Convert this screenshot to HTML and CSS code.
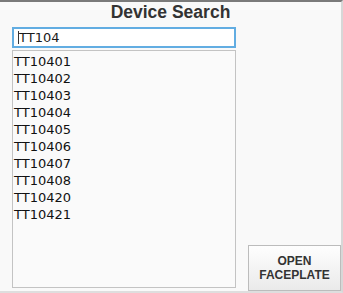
FILE: index.html
```html
<!DOCTYPE html>
<html>
<head>
	<meta charset="utf-8">
	<meta name="viewport" content="width=device-width,initial-scale=1.0">
	<title>Device Search</title>
	<link rel="stylesheet" href="styles.css">
</head>
<body>
	<div class="window">
		<h1>Device Search</h1>
		<div class="content">
			<!-- zoekveld + resultaten -->
			<div class="search-col">
				<label class="search-wrap">
					<input class="search-box" type="text" value="TT104">
				</label>
				<ul class="result-list">
					<li>TT10401</li>
					<li>TT10402</li>
					<li>TT10403</li>
					<li>TT10404</li>
					<li>TT10405</li>
					<li>TT10406</li>
					<li>TT10407</li>
					<li>TT10408</li>
					<li>TT10420</li>
					<li>TT10421</li>
				</ul>
			</div>
			<div class="action-col">
				<button class="btn-open">OPEN<br>FACEPLATE</button>
			</div>
		</div>
	</div>
</body>
</html>
```

FILE: styles.css
```css
* {
	margin: 0;
	padding: 0;
}
body {
	background: #f9f9f9;
	width: 343px;
	height: 293px;
	overflow: hidden;
}
.window {
	height: 293px;
	box-sizing: border-box;
	border-top: 2px solid #7a7a7a;
	border-right: 2px solid #d7d7d7;
	border-bottom: 2px solid #dedede;
	display: flex;
	flex-direction: column;
}
h1 {
	font-family: "Liberation Sans", Arial, sans-serif;
	font-size: 17.5px;
	font-weight: bold;
	line-height: 20px;
	color: #333;
	text-align: center;
	padding-bottom: 5px;
}
.content {
	flex: 1;
	display: flex;
	gap: 12px;
	padding-left: 12px;
	min-height: 0;
}
.search-col {
	width: 224px;
	display: flex;
	flex-direction: column;
	gap: 2px;
	padding-bottom: 3px;
}
.search-wrap {
	position: relative;
	display: block;
}
/* text cursor at the start of the field */
.search-wrap::before {
	content: "";
	position: absolute;
	left: 6px;
	top: 4px;
	width: 1px;
	height: 13px;
	background: #333;
}
.search-box {
	display: block;
	width: 100%;
	height: 21px;
	box-sizing: border-box;
	border: 2px solid #62ade2;
	background: #fff;
	padding: 0 4px 0 5px;
	font-family: "DejaVu Sans", sans-serif;
	font-size: 13px;
	color: #1a1a1a;
	caret-color: transparent;
}
.search-box:focus {
	outline: none;
}
.result-list {
	flex: 1;
	list-style: none;
	border: 1px solid #c3c3c3;
	background: #fafafa;
	padding: 2px 1px 0 1px;
	font-family: "DejaVu Sans", sans-serif;
	font-size: 13px;
	line-height: 17px;
	color: #111;
	overflow: hidden;
}
.action-col {
	width: 93px;
	display: flex;
	align-items: flex-end;
}
.btn-open {
	width: 93px;
	height: 46px;
	border: 1px solid #bcbcbc;
	background: linear-gradient(#fefefe, #eaeaea);
	font-family: "Liberation Sans", Arial, sans-serif;
	font-size: 12px;
	font-weight: bold;
	line-height: 14px;
	color: #333;
}
```
